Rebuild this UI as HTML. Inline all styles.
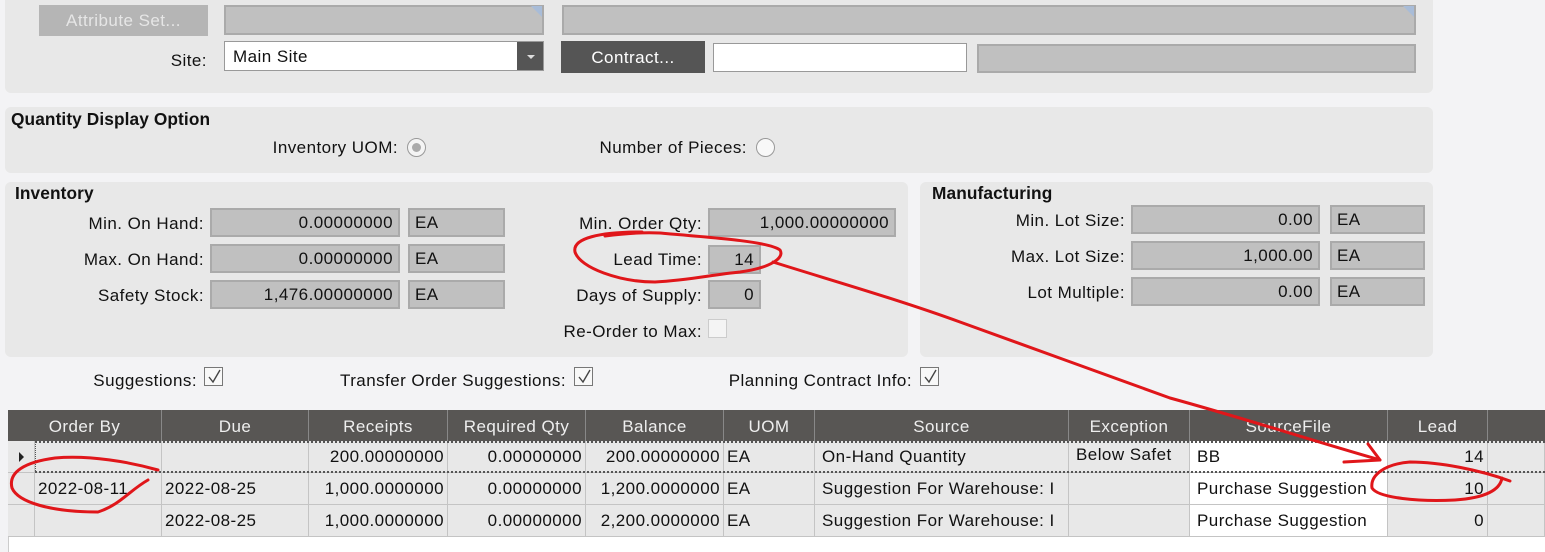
<!DOCTYPE html>
<html><head><meta charset="utf-8"><style>
*{box-sizing:border-box;margin:0;padding:0}
body{width:1545px;height:552px;overflow:hidden;background:#f3f3f5;font-family:"Liberation Sans",Arial,sans-serif;font-size:17px;letter-spacing:0.45px;color:#111;position:relative}
.a{position:absolute}
.pn{position:absolute;background:#e8e8e8;border-radius:6px}
.f{position:absolute;background:#c0c0c0;border:2px solid #aaa;height:29px;line-height:26px;padding:0 5px;white-space:nowrap}
.r{text-align:right}
.lb{position:absolute;text-align:right;white-space:nowrap;line-height:20px}
.b{font-weight:bold;letter-spacing:0.1px;font-size:17.3px}
.cb{position:absolute;width:19px;height:19px;border:1px solid #777;background:#f8f8f8}
.cb svg{position:absolute;left:2px;top:1px}
.grid{position:absolute;left:8px;top:410px;width:1537px}
.hd{position:absolute;top:0;height:31px;background:#585654;color:#eee;text-align:center;line-height:34px;border-right:1px solid #888}
.c{position:absolute;height:32px;line-height:31px;border-right:1px solid #c4c4c4;border-bottom:1px solid #c4c4c4;background:#e8e8e8;padding:0 3px;white-space:nowrap;overflow:hidden}
.w{background:#fff}
</style></head><body>
<div class="pn" style="left:5px;top:-6px;width:1428px;height:99px"></div>
<div class="a" style="left:39px;top:5px;width:169px;height:31px;background:#b5b5b5;color:#e6e6e6;text-align:center;line-height:31px">Attribute Set...</div>
<div class="f" style="left:224px;top:5px;width:320px;height:30px"></div>
<div class="a" style="left:531px;top:6px;width:0;height:0;border-left:11px solid transparent;border-top:11px solid #a8bcd8"></div>
<div class="f" style="left:562px;top:5px;width:854px;height:30px"></div>
<div class="a" style="left:1403px;top:6px;width:0;height:0;border-left:11px solid transparent;border-top:11px solid #a8bcd8"></div>
<div class="lb" style="left:100px;width:107px;top:51px">Site:</div>
<div class="a" style="left:224px;top:41px;width:320px;height:30px;background:#fff;border:1px solid #999;padding-left:8px;line-height:29px">Main Site</div>
<div class="a" style="left:517px;top:42px;width:26px;height:28px;background:#555"></div>
<div class="a" style="left:527px;top:55px;border-left:4px solid transparent;border-right:4px solid transparent;border-top:4px solid #ddd"></div>
<div class="a" style="left:561px;top:41px;width:144px;height:32px;background:#555;color:#fff;text-align:center;line-height:34px">Contract...</div>
<div class="a" style="left:713px;top:43px;width:254px;height:29px;background:#fff;border:1px solid #999"></div>
<div class="f" style="left:977px;top:44px;width:439px;height:29px"></div>

<div class="pn" style="left:5px;top:107px;width:1428px;height:66px"></div>
<div class="a b" style="left:11px;top:109px">Quantity Display Option</div>
<div class="lb" style="left:200px;width:198px;top:138px">Inventory UOM:</div>
<div class="a" style="left:407px;top:138px;width:19px;height:19px;border-radius:50%;border:1px solid #999;background:#f4f4f4"></div>
<div class="a" style="left:412px;top:143px;width:9px;height:9px;border-radius:50%;background:#aaa"></div>
<div class="lb" style="left:540px;width:207px;top:138px">Number of Pieces:</div>
<div class="a" style="left:756px;top:138px;width:19px;height:19px;border-radius:50%;border:1px solid #999;background:#f8f8f8"></div>

<div class="pn" style="left:5px;top:182px;width:903px;height:175px"></div>
<div class="a b" style="left:15px;top:183px">Inventory</div>
<div class="lb" style="left:20px;width:184px;top:214px">Min. On Hand:</div>
<div class="f r" style="left:210px;top:208px;width:190px">0.00000000</div>
<div class="f" style="left:408px;top:208px;width:97px">EA</div>
<div class="lb" style="left:20px;width:184px;top:250px">Max. On Hand:</div>
<div class="f r" style="left:210px;top:244px;width:190px">0.00000000</div>
<div class="f" style="left:408px;top:244px;width:97px">EA</div>
<div class="lb" style="left:20px;width:184px;top:286px">Safety Stock:</div>
<div class="f r" style="left:210px;top:280px;width:190px">1,476.00000000</div>
<div class="f" style="left:408px;top:280px;width:97px">EA</div>
<div class="lb" style="left:520px;width:182px;top:214px">Min. Order Qty:</div>
<div class="f r" style="left:708px;top:208px;width:188px">1,000.00000000</div>
<div class="lb" style="left:520px;width:182px;top:250px">Lead Time:</div>
<div class="f r" style="left:708px;top:245px;width:53px">14</div>
<div class="lb" style="left:520px;width:182px;top:286px">Days of Supply:</div>
<div class="f r" style="left:708px;top:280px;width:53px">0</div>
<div class="lb" style="left:520px;width:182px;top:322px">Re-Order to Max:</div>
<div class="a" style="left:708px;top:319px;width:19px;height:19px;border:1px solid #ccc;background:#f4f4f4"></div>

<div class="pn" style="left:920px;top:182px;width:513px;height:175px"></div>
<div class="a b" style="left:932px;top:183px">Manufacturing</div>
<div class="lb" style="left:940px;width:185px;top:211px">Min. Lot Size:</div>
<div class="f r" style="left:1131px;top:205px;width:189px">0.00</div>
<div class="f" style="left:1330px;top:205px;width:95px">EA</div>
<div class="lb" style="left:940px;width:185px;top:247px">Max. Lot Size:</div>
<div class="f r" style="left:1131px;top:241px;width:189px">1,000.00</div>
<div class="f" style="left:1330px;top:241px;width:95px">EA</div>
<div class="lb" style="left:940px;width:185px;top:283px">Lot Multiple:</div>
<div class="f r" style="left:1131px;top:277px;width:189px">0.00</div>
<div class="f" style="left:1330px;top:277px;width:95px">EA</div>

<div class="lb" style="left:40px;width:157px;top:371px">Suggestions:</div>
<div class="cb" style="left:204px;top:367px"><svg width="15" height="16"><path d="M2 8 L6 13 L13 1" fill="none" stroke="#444" stroke-width="1.4"/></svg></div>
<div class="lb" style="left:300px;width:266px;top:371px">Transfer Order Suggestions:</div>
<div class="cb" style="left:574px;top:367px"><svg width="15" height="16"><path d="M2 8 L6 13 L13 1" fill="none" stroke="#444" stroke-width="1.4"/></svg></div>
<div class="lb" style="left:680px;width:232px;top:371px">Planning Contract Info:</div>
<div class="cb" style="left:920px;top:367px"><svg width="15" height="16"><path d="M2 8 L6 13 L13 1" fill="none" stroke="#444" stroke-width="1.4"/></svg></div>

<div class="a" style="left:8px;top:537px;width:1537px;height:15px;background:#fff;border-left:1px solid #ccc"></div>
<div class="grid">
<div class="hd" style="left:0;width:154px">Order By</div>
<div class="hd" style="left:154px;width:147px">Due</div>
<div class="hd" style="left:301px;width:139px">Receipts</div>
<div class="hd" style="left:440px;width:138px">Required Qty</div>
<div class="hd" style="left:578px;width:138px">Balance</div>
<div class="hd" style="left:716px;width:91px">UOM</div>
<div class="hd" style="left:807px;width:254px">Source</div>
<div class="hd" style="left:1061px;width:121px">Exception</div>
<div class="hd" style="left:1182px;width:198px">SourceFile</div>
<div class="hd" style="left:1380px;width:100px">Lead</div>
<div class="hd" style="left:1480px;width:57px;border-right:none"></div>

<div class="c" style="left:0;top:31px;width:27px"></div>
<div class="a" style="left:11px;top:42px;border-top:5px solid transparent;border-bottom:5px solid transparent;border-left:5px solid #222"></div>
<div class="c" style="left:27px;top:31px;width:127px"></div>
<div class="c" style="left:154px;top:31px;width:147px"></div>
<div class="c r" style="left:301px;top:31px;width:139px">200.00000000</div>
<div class="c r" style="left:440px;top:31px;width:138px">0.00000000</div>
<div class="c r" style="left:578px;top:31px;width:138px">200.00000000</div>
<div class="c" style="left:716px;top:31px;width:91px">EA</div>
<div class="c" style="left:807px;top:31px;width:254px;padding-left:7px">On-Hand Quantity</div>
<div class="c" style="left:1061px;top:31px;width:121px;line-height:27px;padding-left:7px">Below Safet</div>
<div class="c w" style="left:1182px;top:31px;width:198px;padding-left:7px">BB</div>
<div class="c r" style="left:1380px;top:31px;width:100px">14</div>
<div class="c" style="left:1480px;top:31px;width:57px"></div>
<div class="a" style="left:27px;top:31px;width:1510px;height:0;border-top:2px dotted #555"></div>
<div class="a" style="left:27px;top:61px;width:1510px;height:0;border-top:2px dotted #555"></div>
<div class="a" style="left:27px;top:31px;width:0;height:32px;border-left:1px dotted #555"></div>

<div class="c" style="left:0;top:63px;width:27px"></div>
<div class="c" style="left:27px;top:63px;width:127px">2022-08-11</div>
<div class="c" style="left:154px;top:63px;width:147px">2022-08-25</div>
<div class="c r" style="left:301px;top:63px;width:139px">1,000.0000000</div>
<div class="c r" style="left:440px;top:63px;width:138px">0.00000000</div>
<div class="c r" style="left:578px;top:63px;width:138px">1,200.0000000</div>
<div class="c" style="left:716px;top:63px;width:91px">EA</div>
<div class="c" style="left:807px;top:63px;width:254px;padding-left:7px">Suggestion For Warehouse: I</div>
<div class="c" style="left:1061px;top:63px;width:121px"></div>
<div class="c w" style="left:1182px;top:63px;width:198px;padding-left:7px">Purchase Suggestion</div>
<div class="c r" style="left:1380px;top:63px;width:100px">10</div>
<div class="c" style="left:1480px;top:63px;width:57px"></div>

<div class="c" style="left:0;top:95px;width:27px"></div>
<div class="c" style="left:27px;top:95px;width:127px"></div>
<div class="c" style="left:154px;top:95px;width:147px">2022-08-25</div>
<div class="c r" style="left:301px;top:95px;width:139px">1,000.0000000</div>
<div class="c r" style="left:440px;top:95px;width:138px">0.00000000</div>
<div class="c r" style="left:578px;top:95px;width:138px">2,200.0000000</div>
<div class="c" style="left:716px;top:95px;width:91px">EA</div>
<div class="c" style="left:807px;top:95px;width:254px;padding-left:7px">Suggestion For Warehouse: I</div>
<div class="c" style="left:1061px;top:95px;width:121px"></div>
<div class="c w" style="left:1182px;top:95px;width:198px;padding-left:7px">Purchase Suggestion</div>
<div class="c r" style="left:1380px;top:95px;width:100px">0</div>
<div class="c" style="left:1480px;top:95px;width:57px"></div>
</div>

<svg class="a" style="left:0;top:0" width="1545" height="552" fill="none" stroke="#e0161a" stroke-width="3" stroke-linecap="round" stroke-linejoin="round">
<path d="M642 232 C600 232 572 238 575 252 C580 268 620 282 655 282 C690 280 710 275 740 272 C770 268 785 258 780 250 C770 242 720 238 660 233 C640 232 620 234 605 236"/>
<path d="M773 262 C830 280 900 300 960 322 C1030 348 1100 372 1170 398 C1250 420 1310 440 1380 460"/>
<path d="M1344 462 L1380 460 L1368 444"/>
<path d="M1510 481 C1480 470 1440 462 1410 462 C1385 464 1370 475 1372 488 C1378 498 1420 502 1455 500 C1485 498 1500 490 1502 478"/>
<path d="M158 470 C130 462 90 455 55 458 C25 462 8 472 12 488 C18 502 50 512 98 512 C120 505 130 490 148 480"/>
</svg>
</body></html>
